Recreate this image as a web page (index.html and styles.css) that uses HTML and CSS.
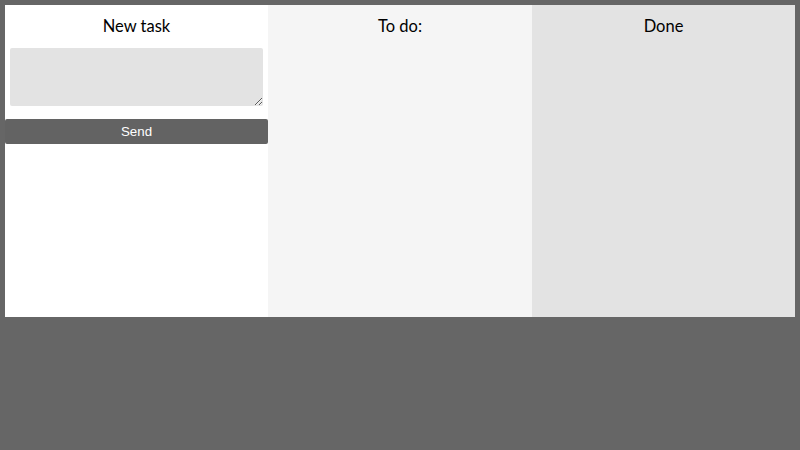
FILE: index.html
```html
<!DOCTYPE html>
<html>
<head>
<meta charset="utf-8">
<link rel="stylesheet" href="styles.css">
</head>
<body>
<main class="board">
  <section class="col col-new">
    <h2 class="col-title">New task</h2>
    <textarea class="task-input"></textarea>
    <button class="send-btn">Send</button>
  </section>
  <section class="col col-todo">
    <h2 class="col-title">To do:</h2>
  </section>
  <section class="col col-done">
    <h2 class="col-title">Done</h2>
  </section>
</main>
</body>
</html>
```
FILE: styles.css
```css
html, body {
  margin: 0;
  padding: 0;
}
body {
  background: #666666;
  padding: 5px;
  font-family: "Liberation Sans", Arial, sans-serif;
}
.board {
  display: grid;
  grid-template-columns: 263px 264px 263px;
  height: 312px;
}
.col {
  display: flex;
  flex-direction: column;
}
.col-new { background: #ffffff; }
.col-todo { background: #f5f5f5; }
.col-done { background: #e3e3e3; }
.col-title {
  margin: 0;
  padding-top: 10px;
  font-family: Lato, "Noto Sans", sans-serif;
  font-weight: 400;
  font-size: 16.5px;
  line-height: 22px;
  text-align: center;
  color: #000;
}
.task-input {
  margin: 11px 5px 0;
  height: 58px;
  box-sizing: border-box;
  background: #e3e3e3;
  border: none;
  border-radius: 2px;
  resize: vertical;
}
.send-btn {
  margin-top: 13px;
  height: 25px;
  background: #636363;
  color: #ffffff;
  border: none;
  border-radius: 2px;
  font-family: "Liberation Sans", Arial, sans-serif;
  font-size: 13.3px;
  padding: 0;
}
```
